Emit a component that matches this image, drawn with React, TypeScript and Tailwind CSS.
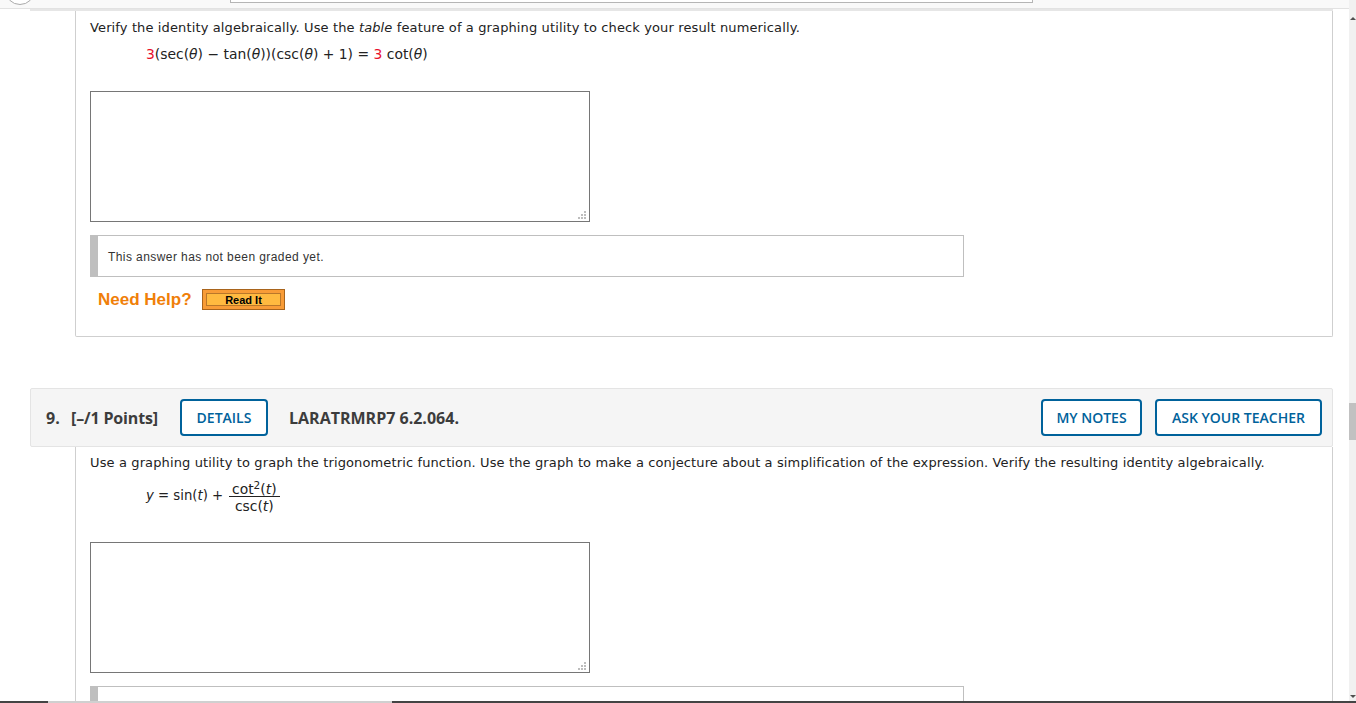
function Answer() {
    return (
        <div className="relative w-[500px] h-[131px]">
            <textarea className="block w-full h-full resize-none border border-[#767676] bg-white" />
            {/* resize grip */}
            <svg className="absolute right-[4px] bottom-[3px]" width="8" height="8" viewBox="0 0 8 8" fill="#bdbdbd">
                <rect x="6" y="0" width="2" height="2" />
                <rect x="3" y="3" width="2" height="2" />
                <rect x="6" y="3" width="2" height="2" />
                <rect x="0" y="6" width="2" height="2" />
                <rect x="3" y="6" width="2" height="2" />
                <rect x="6" y="6" width="2" height="2" />
            </svg>
        </div>
    );
}

function Notice({ text }: { text?: string }) {
    return (
        <div className="flex w-[874px] h-[42px] border border-[#bfbfbf] border-l-[8px] items-center pt-[1px] pl-[10px] font-['Liberation_Sans',sans-serif] text-[12px] tracking-[0.42px] text-[#333]">
            {text}
        </div>
    );
}

function OutlineButton({ label, width }: { label: string; width: string }) {
    return (
        <button
            className={`${width} h-[37px] rounded-[4px] border-2 border-[#00629b] bg-white text-[#00629b] text-[14px] font-semibold font-['Open_Sans',sans-serif]`}
        >
            {label}
        </button>
    );
}

export default function App() {
    return (
        <div className="relative flex h-[703px] overflow-hidden bg-white text-[#222] font-['DejaVu_Sans',sans-serif] text-[13px] tracking-[0.125px]">
            <div className="flex-1 min-w-0">
                {/* top toolbar cut off by the scroll position */}
                <div className="h-[9px] bg-[#f9f9f9] border-b border-[#e2e2e2] relative overflow-hidden">
                    <div className="absolute left-[5px] top-[-33px] w-[30px] h-[38px] rounded-full border border-[#aaa] bg-white" />
                    <div className="absolute left-[230px] top-[-10px] w-[803px] h-[13px] border border-[#b5b5b5] bg-white" />
                </div>
                <div className="ml-[30px] w-[1303px] h-[2px] bg-[#e6e6e6]" />

                <div className="ml-[75px] w-[1258px] h-[326px] border border-t-0 border-[#cfcfcf] rounded-b-[2px] pl-[14px] pt-[8px]">
                    <p className="h-[18px] leading-[18px]">
                        Verify the identity algebraically. Use the <i>table</i> feature of a graphing utility to check your result numerically.
                    </p>
                    <p className="ml-[56px] mt-[8px] h-[18px] leading-[18px] text-[13.9px] tracking-normal">
                        <span className="text-[#e8112d]">3</span>(sec(<i>θ</i>) − tan(<i>θ</i>))(csc(<i>θ</i>) + 1) = <span className="text-[#e8112d]">3</span> cot(<i>θ</i>)
                    </p>
                    <div className="mt-[28px]">
                        <Answer />
                    </div>
                    <div className="mt-[13px]">
                        <Notice text="This answer has not been graded yet." />
                    </div>
                    <div className="flex items-center mt-[12px] ml-[8px] h-[21px] font-['Liberation_Sans',sans-serif] tracking-normal">
                        <span className="text-[17px] font-bold text-[#f07f09] w-[104px]">Need Help?</span>
                        <div className="w-[83px] h-[21px] border border-[#a8641c] bg-[#f89c37] p-[3px]">
                            <div className="h-full border border-[#b9772a] bg-[#ffba40] flex items-center justify-center pt-[1px] text-[11px] font-bold text-black">
                                Read It
                            </div>
                        </div>
                    </div>
                </div>

                <div className="ml-[30px] mt-[51px] w-[1303px] h-[59px] bg-[#f5f5f5] border border-[#e4e4e4] rounded-[2px] flex items-center pl-[15px] pr-[10px] text-[16px] font-bold text-[#3c3c3c] font-['Open_Sans',sans-serif] tracking-normal">
                    <span className="w-[25px]">9.</span>
                    <span className="w-[109px] tracking-[-0.15px]">[–/1 Points]</span>
                    <OutlineButton label="DETAILS" width="w-[88px]" />
                    <span className="ml-[21px]">LARATRMRP7 6.2.064.</span>
                    <div className="ml-auto flex gap-[13px]">
                        <OutlineButton label="MY NOTES" width="w-[101px]" />
                        <OutlineButton label="ASK YOUR TEACHER" width="w-[167px]" />
                    </div>
                </div>

                <div className="ml-[75px] w-[1258px] h-[300px] border-x border-[#cfcfcf] pl-[14px] pt-[7px]">
                    <p className="h-[18px] leading-[18px]">
                        Use a graphing utility to graph the trigonometric function. Use the graph to make a conjecture about a simplification of the expression. Verify the resulting identity algebraically.
                    </p>
                    <div className="flex items-center ml-[56px] mt-[7px] h-[36px] tracking-normal">
                        <span className="w-[83px] text-[13.25px] mt-[-2px]">
                            <i>y</i> = sin(<i>t</i>) +
                        </span>
                        <span className="flex flex-col items-center text-[13.9px]">
                            <span className="border-b border-[#222] px-[3px] h-[17px] leading-[18px]">
                                cot<sup className="text-[10.5px]">2</sup>(<i>t</i>)
                            </span>
                            <span className="h-[17px] leading-[19px]">
                                csc(<i>t</i>)
                            </span>
                        </span>
                    </div>
                    <div className="mt-[27px]">
                        <Answer />
                    </div>
                    <div className="mt-[13px]">
                        <Notice />
                    </div>
                </div>
            </div>

            {/* browser scrollbar */}
            <div className="w-[7px] shrink-0 bg-[#f1f1f1] flex flex-col justify-between items-center pt-[17px] pb-[5px] relative">
                <div className="w-0 h-0 border-x-[3px] border-x-transparent border-b-[3px] border-b-[#505050]" />
                <div className="absolute left-0 top-[403px] w-full h-[37px] bg-[#c1c1c1]" />
                <div className="w-0 h-0 border-x-[3px] border-x-transparent border-t-[3px] border-t-[#505050]" />
            </div>

            {/* bottom window edge */}
            <div className="absolute bottom-0 left-0 right-0 h-[2px] bg-[#444] flex">
                <div className="ml-[48px] w-[344px] bg-[#d0d0d0]" />
            </div>
        </div>
    );
}
